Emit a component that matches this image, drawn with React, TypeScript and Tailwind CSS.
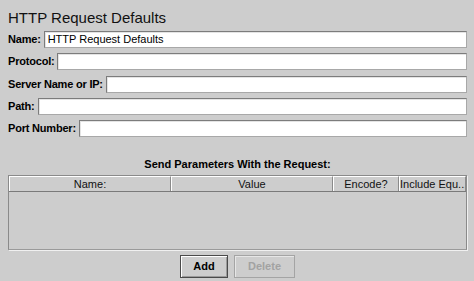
import React from 'react';

const fields = [
  { label: 'Name:', value: 'HTTP Request Defaults', mt: 'mt-0' },
  { label: 'Protocol:', value: '', mt: 'mt-[5px]' },
  { label: 'Server Name or IP:', value: '', mt: 'mt-[6px]' },
  { label: 'Path:', value: '', mt: 'mt-[5px]' },
  { label: 'Port Number:', value: '', mt: 'mt-[5px]' },
];

const columns = [
  { title: 'Name:', width: 'w-[162px]' },
  { title: 'Value', width: 'w-[162px]' },
  { title: 'Encode?', width: 'w-[66px]' },
  { title: 'Include Equ...', width: 'flex-1' },
];

function App() {
  return (
    <div className="w-[474px] h-[281px] bg-[#cdcdcd] text-black font-['Liberation_Sans',Arial,sans-serif] pl-[8px] pr-[7px] pt-[9px] overflow-hidden">
      <h1 className="text-[15px] leading-[18px] h-[18px] text-[#111]">HTTP Request Defaults</h1>

      {/* Form rows */}
      <div className="mt-[4px] flex flex-col">
        {fields.map((f) => (
          <div key={f.label} className={`${f.mt} flex items-center h-[17px] gap-[3px]`}>
            <span className="text-[11px] font-bold tracking-[-0.2px] whitespace-nowrap">{f.label}</span>
            <div className="flex-1 h-[17px] bg-white border border-[#7c7c7c] border-b-[#a8a8a8] border-r-[#a8a8a8] shadow-[inset_1px_1px_0_#e4e4e4] flex items-center px-[3px] text-[11px]">
              {f.value}
            </div>
          </div>
        ))}
      </div>

      {/* Parameters table */}
      <div className="mt-[21px] text-center text-[11px] font-bold leading-[13px]">Send Parameters With the Request:</div>
      <div className="mt-[4px] h-[75px] border border-[#8a8a8a] border-b-[#9a9a9a] shadow-[1px_1px_0_#f0f0f0] flex flex-col">
        <div className="flex h-[16px] border-b border-[#7a7a7a]">
          {columns.map((c) => (
            <div
              key={c.title}
              className={`${c.width} h-full border-t border-l border-white border-r border-r-[#8a8a8a] text-[11px] leading-[14px] text-center whitespace-nowrap overflow-hidden text-[#111]`}
            >
              {c.title}
            </div>
          ))}
        </div>
        <div className="flex-1" />
      </div>

      {/* Buttons */}
      <div className="mt-[5px] flex justify-center gap-[6px]">
        <button className="w-[48px] h-[23px] border border-[#4a4a4a] shadow-[inset_1px_1px_0_#ffffff,inset_-1px_-1px_0_#9a9a9a] bg-[#cdcdcd] text-[11px] font-bold">
          Add
        </button>
        <button disabled className="w-[61px] h-[23px] border border-[#a4a4a4] shadow-[inset_1px_1px_0_#e6e6e6] bg-[#cdcdcd] text-[11px] font-bold text-[#a2a2a2]">
          Delete
        </button>
      </div>
    </div>
  );
}

export default App;
